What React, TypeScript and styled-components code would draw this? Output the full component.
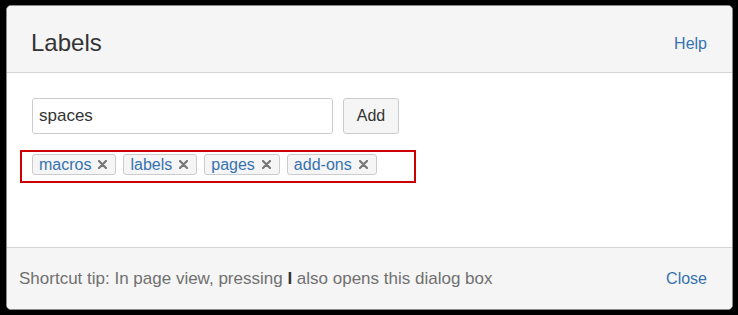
import React from 'react';
import styled, { createGlobalStyle } from 'styled-components';

const GlobalStyle = createGlobalStyle({
  'html, body': {
    margin: 0,
    padding: 0,
    background: '#000',
  },
  body: {
    fontFamily: '"Liberation Sans", Arial, sans-serif',
  },
});

const Frame = styled.div({
  width: 738,
  height: 315,
  boxSizing: 'border-box',
  padding: '5px 5px 5px 6px',
  background: '#000',
});

const Dialog = styled.div({
  height: '100%',
  boxSizing: 'border-box',
  display: 'flex',
  flexDirection: 'column',
  background: '#fff',
  border: '1px solid #8a8a8a',
  borderRadius: 5,
  overflow: 'hidden',
});

const Header = styled.div({
  height: 67,
  flexShrink: 0,
  display: 'flex',
  alignItems: 'center',
  justifyContent: 'space-between',
  boxSizing: 'border-box',
  padding: '8px 25px 0 24px',
  background: '#f5f5f5',
  borderBottom: '1px solid #d4d4d4',
});

const Title = styled.h2({
  margin: 0,
  fontSize: 24,
  fontWeight: 400,
  color: '#333',
});

const Link = styled.a<{ $nudge?: number }>(({ $nudge }) => ({
  fontSize: 16,
  color: '#3572b0',
  textDecoration: 'none',
  marginTop: $nudge ?? 0,
}));

const Body = styled.div({
  flex: 1,
  padding: '25px 25px 0 25px',
});

const InputRow = styled.div({
  display: 'flex',
  gap: 10,
});

const TextInput = styled.input({
  width: 301,
  height: 36,
  boxSizing: 'border-box',
  border: '1px solid #ccc',
  borderRadius: 3,
  padding: '0 6px',
  fontFamily: 'inherit',
  fontSize: 17,
  color: '#333',
  outline: 'none',
});

const Button = styled.button({
  width: 56,
  height: 36,
  boxSizing: 'border-box',
  border: '1px solid #ccc',
  borderRadius: 3,
  background: '#f5f5f5',
  fontFamily: 'inherit',
  fontSize: 16,
  color: '#333',
  padding: 0,
});

const Highlight = styled.div({
  width: 396,
  height: 33,
  boxSizing: 'border-box',
  margin: '16px 0 0 -12px',
  padding: '2px 0 0 10px',
  border: '2px solid #cc0000',
});

const TagList = styled.ul({
  listStyle: 'none',
  margin: 0,
  padding: 0,
  display: 'flex',
  gap: 7,
});

const Tag = styled.li({
  display: 'flex',
  alignItems: 'center',
  height: 21,
  boxSizing: 'border-box',
  padding: '0 8px 0 6px',
  gap: 7,
  background: '#f5f5f5',
  border: '1px solid #ccc',
  borderRadius: 3,
  fontSize: 16,
  color: '#3572b0',
});

const Remove = styled.svg({
  width: 9,
  height: 9,
  flexShrink: 0,
});

const Footer = styled.div({
  height: 61,
  flexShrink: 0,
  display: 'flex',
  alignItems: 'center',
  justifyContent: 'space-between',
  padding: '0 25px 0 12px',
  background: '#f5f5f5',
  borderTop: '1px solid #d4d4d4',
});

const Tip = styled.span({
  fontSize: 17,
  color: '#707070',
  marginTop: 1,
  '& b': {
    color: '#333',
  },
});

const tags = ['macros', 'labels', 'pages', 'add-ons'];

const App = () => {
  return (
    <>
      <GlobalStyle />
      <Frame>
        <Dialog>
          <Header>
            <Title>Labels</Title>
            <Link href="#" $nudge={2}>Help</Link>
          </Header>
          <Body>
            <InputRow>
              <TextInput defaultValue="spaces" />
              <Button>Add</Button>
            </InputRow>
            <Highlight>
              <TagList>
                {tags.map((t) => (
                  <Tag key={t}>
                    {t}
                    <Remove viewBox="0 0 9 9">
                      <path d="M1 1L8 8M8 1L1 8" stroke="#777" strokeWidth="2.2" strokeLinecap="round" />
                    </Remove>
                  </Tag>
                ))}
              </TagList>
            </Highlight>
          </Body>
          <Footer>
            <Tip>Shortcut tip: In page view, pressing <b>I</b> also opens this dialog box</Tip>
            <Link href="#">Close</Link>
          </Footer>
        </Dialog>
      </Frame>
    </>
  );
};

export default App;
